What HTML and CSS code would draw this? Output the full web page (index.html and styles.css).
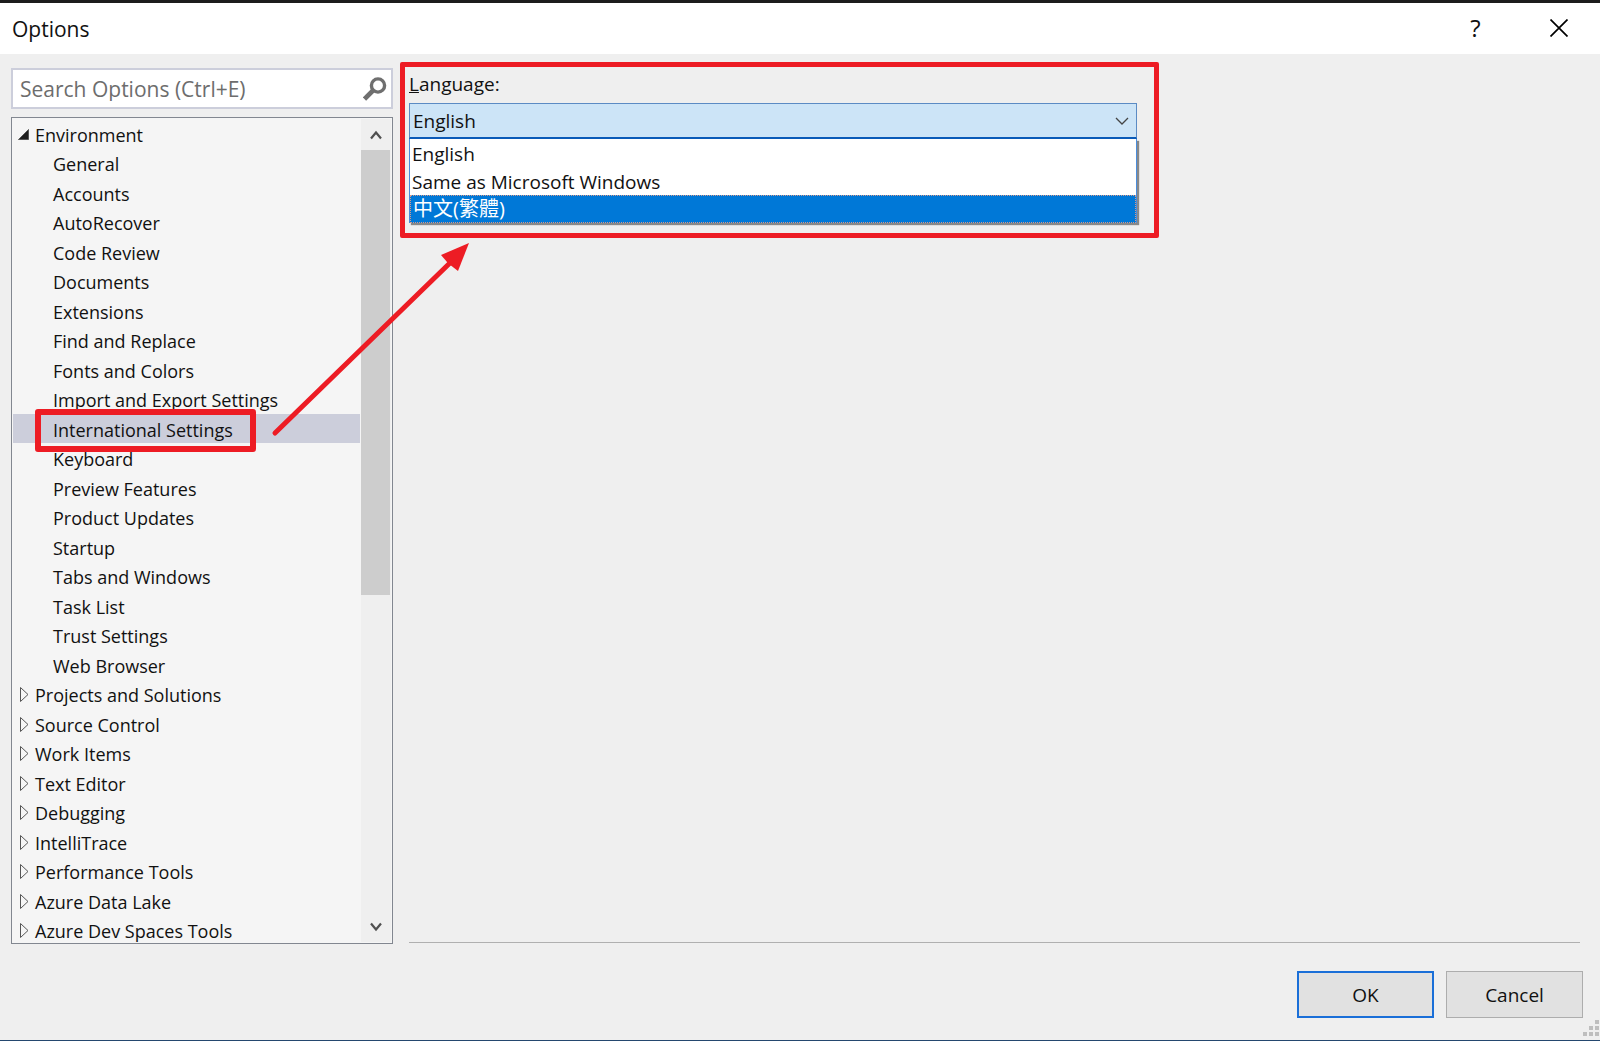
FILE: index.html
```html
<!DOCTYPE html>
<html lang="en">
<head>
<meta charset="utf-8">
<title>Options</title>
<link rel="stylesheet" href="styles.css">
</head>
<body>
<div class="dialog">
  <header class="titlebar">
    <h1 class="title">Options</h1>
    <button class="title-button" type="button" aria-label="Help"><span class="help-mark">?</span></button>
    <button class="title-button" type="button" aria-label="Close">
      <svg width="18" height="18" viewBox="0 0 18 18"><path d="M0.5 0.5L17.5 17.5M17.5 0.5L0.5 17.5" stroke="#000" stroke-width="1.7" fill="none"/></svg>
    </button>
  </header>

  <div class="content">
    <nav class="sidebar">
      <div class="search">
        <input class="search-input" type="text" placeholder="Search Options (Ctrl+E)" aria-label="Search Options">
        <svg class="search-icon" width="24" height="24" viewBox="0 0 24 24"><circle cx="15" cy="8.5" r="6.6" fill="none" stroke="#6f6f6f" stroke-width="3.4"/><path d="M10.500 13L1.500 22" stroke="#6f6f6f" stroke-width="4.6"/></svg>
      </div>
      <div class="tree">
        <ul class="tree-list" role="tree">
          <li class="root" role="treeitem" aria-expanded="true"><svg class="arrow" width="12" height="16" viewBox="0 0 12 16"><path d="M10.500 2.500V12.500H0.500Z" fill="#1e1e1e"/></svg>Environment</li>
          <li class="leaf" role="treeitem">General</li>
          <li class="leaf" role="treeitem">Accounts</li>
          <li class="leaf" role="treeitem">AutoRecover</li>
          <li class="leaf" role="treeitem">Code Review</li>
          <li class="leaf" role="treeitem">Documents</li>
          <li class="leaf" role="treeitem">Extensions</li>
          <li class="leaf" role="treeitem">Find and Replace</li>
          <li class="leaf" role="treeitem">Fonts and Colors</li>
          <li class="leaf" role="treeitem">Import and Export Settings</li>
          <li class="leaf selected" role="treeitem" aria-selected="true">International Settings</li>
          <li class="leaf" role="treeitem">Keyboard</li>
          <li class="leaf" role="treeitem">Preview Features</li>
          <li class="leaf" role="treeitem">Product Updates</li>
          <li class="leaf" role="treeitem">Startup</li>
          <li class="leaf" role="treeitem">Tabs and Windows</li>
          <li class="leaf" role="treeitem">Task List</li>
          <li class="leaf" role="treeitem">Trust Settings</li>
          <li class="leaf" role="treeitem">Web Browser</li>
          <li class="root" role="treeitem" aria-expanded="false"><svg class="arrow" width="12" height="16" viewBox="0 0 12 16"><path d="M2.5 0.5V14.5L10 7.5Z"/></svg>Projects and Solutions</li>
          <li class="root" role="treeitem" aria-expanded="false"><svg class="arrow" width="12" height="16" viewBox="0 0 12 16"><path d="M2.5 0.5V14.5L10 7.5Z"/></svg>Source Control</li>
          <li class="root" role="treeitem" aria-expanded="false"><svg class="arrow" width="12" height="16" viewBox="0 0 12 16"><path d="M2.5 0.5V14.5L10 7.5Z"/></svg>Work Items</li>
          <li class="root" role="treeitem" aria-expanded="false"><svg class="arrow" width="12" height="16" viewBox="0 0 12 16"><path d="M2.5 0.5V14.5L10 7.5Z"/></svg>Text Editor</li>
          <li class="root" role="treeitem" aria-expanded="false"><svg class="arrow" width="12" height="16" viewBox="0 0 12 16"><path d="M2.5 0.5V14.5L10 7.5Z"/></svg>Debugging</li>
          <li class="root" role="treeitem" aria-expanded="false"><svg class="arrow" width="12" height="16" viewBox="0 0 12 16"><path d="M2.5 0.5V14.5L10 7.5Z"/></svg>IntelliTrace</li>
          <li class="root" role="treeitem" aria-expanded="false"><svg class="arrow" width="12" height="16" viewBox="0 0 12 16"><path d="M2.5 0.5V14.5L10 7.5Z"/></svg>Performance Tools</li>
          <li class="root" role="treeitem" aria-expanded="false"><svg class="arrow" width="12" height="16" viewBox="0 0 12 16"><path d="M2.5 0.5V14.5L10 7.5Z"/></svg>Azure Data Lake</li>
          <li class="root" role="treeitem" aria-expanded="false"><svg class="arrow" width="12" height="16" viewBox="0 0 12 16"><path d="M2.5 0.5V14.5L10 7.5Z"/></svg>Azure Dev Spaces Tools</li>
        </ul>
        <div class="scrollbar">
          <button class="scroll-button" type="button" aria-label="Scroll up"><svg width="12" height="10" viewBox="0 0 12 10"><path d="M1 8.5L6 2.5L11 8.5" fill="none" stroke="#505050" stroke-width="2.2"/></svg></button>
          <div class="scroll-track"><div class="scroll-thumb"></div></div>
          <button class="scroll-button" type="button" aria-label="Scroll down"><svg width="12" height="10" viewBox="0 0 12 10"><path d="M1 1.5L6 7.5L11 1.5" fill="none" stroke="#505050" stroke-width="2.2"/></svg></button>
        </div>
      </div>
    </nav>

    <main class="page">
      <section class="language">
        <label class="language-label" for="language"><u>L</u>anguage:</label>
        <div class="combo">
          <select class="combo-select" id="language"><option>English</option><option>Same as Microsoft Windows</option><option>中文(繁體)</option></select>
          <svg class="combo-chevron" width="14" height="8" viewBox="0 0 14 8"><path d="M1 1L7 7L13 1" fill="none" stroke="#444" stroke-width="1.3"/></svg>
        </div>
        <ul class="dropdown" role="listbox" aria-label="Language">
          <li class="option" role="option">English</li>
          <li class="option" role="option">Same as Microsoft Windows</li>
          <li class="option active" role="option" aria-selected="true">中文(繁體)</li>
        </ul>
      </section>
      <hr class="divider">
    </main>

    <svg class="pointer" width="202" height="198" viewBox="0 0 202 198"><path d="M4 193L182 20" stroke="#ed1c24" stroke-width="5" stroke-linecap="round"/><path d="M198 3L170 15L176 22L178 24L187 31Z" fill="#ed1c24"/></svg>
  </div>

  <footer class="actions">
    <button class="button primary" type="button">OK</button>
    <button class="button" type="button">Cancel</button>
    <svg class="grip" width="16" height="16" viewBox="0 0 16 16" fill="#bebebe"><path d="M12 0h4v4h-4zM6 6h4v4h-4zM12 6h4v4h-4zM0 12h4v4h-4zM6 12h4v4h-4zM12 12h4v4h-4z"/></svg>
  </footer>
</div>
</body>
</html>
```
FILE: styles.css
```css
*,
*::after {
  box-sizing: border-box;
}

body {
  margin: 0;
  background: #efefef;
  color: #111;
  font: 19px/24px "Open Sans", "Noto Sans", "Noto Sans CJK TC", sans-serif;
}

button,
input,
select {
  font: inherit;
  color: inherit;
  margin: 0;
  border-radius: 0;
}

ul {
  list-style: none;
  margin: 0;
  padding: 0;
}

.dialog {
  display: flex;
  flex-direction: column;
  height: 100vh;
  border-top: 3px solid #1c1c1c;
  border-bottom: 1px solid #24486f;
}

.titlebar {
  display: flex;
  align-items: center;
  height: 51px;
  padding-left: 12px;
  background: #fff;
}

.title {
  flex: 1;
  margin: 0;
  font-size: 21px;
  font-weight: 400;
}

.title-button {
  display: flex;
  align-items: center;
  justify-content: center;
  width: 83px;
  height: 51px;
  padding: 0 0 2px;
  border: 0;
  background: none;
}

.help-mark {
  font-size: 24px;
}

.content {
  position: relative;
  display: flex;
  flex: 1;
  gap: 7px;
  min-height: 0;
  padding: 8px 20px 0 11px;
}

.sidebar {
  display: flex;
  flex-direction: column;
  flex: none;
  gap: 8px;
  width: 382px;
  padding-top: 6px;
}

.search {
  display: flex;
  align-items: center;
  height: 41px;
  padding-right: 4px;
  border: 2px solid #cccedb;
  background: #fff;
}

.search-input {
  flex: 1;
  min-width: 0;
  padding: 1px 0 0 7px;
  border: 0;
  outline: 0;
  background: none;
  font-size: 21px;
}

.search-input::placeholder {
  color: #6d6d6d;
  opacity: 1;
}

.tree {
  display: flex;
  flex: 1;
  gap: 1px;
  min-height: 0;
  padding: 1px;
  border: 1px solid #828790;
  background: #f5f5f5;
  overflow: hidden;
  font-size: 18px;
}

.tree-list {
  flex: 1;
}

.tree-list li {
  display: flex;
  align-items: center;
  height: 29px;
  padding-top: 2px;
  white-space: nowrap;
}

.tree-list li:nth-child(even) {
  height: 30px;
}

.root {
  gap: 5px;
  padding-left: 5px;
}

.arrow {
  fill: none;
  stroke: #555;
}

.leaf {
  padding-left: 40px;
}

.selected {
  position: relative;
  background: #cccedb;
}

.selected::after {
  content: "";
  position: absolute;
  top: -5px;
  left: 22px;
  width: 221px;
  height: 43px;
  border: 6px solid #ed1c24;
  border-radius: 3px;
}

.scrollbar {
  display: flex;
  flex-direction: column;
  width: 30px;
  background: #efefef;
}

.scroll-button {
  display: flex;
  align-items: center;
  justify-content: center;
  height: 31px;
  padding: 0;
  border: 0;
  background: none;
}

.scroll-track {
  flex: 1;
}

.scroll-thumb {
  width: 29px;
  height: 58.5%;
  background: #cdcdcd;
}

.page {
  display: flex;
  flex: 1;
  flex-direction: column;
  justify-content: space-between;
}

.language {
  display: flex;
  flex-direction: column;
  width: 100%;
  max-width: 759px;
  padding: 9px 17px 10px 4px;
  border: 5px solid #ed1c24;
  border-radius: 2px;
}

.language-label {
  align-self: flex-start;
  height: 27px;
  line-height: 16px;
}

.combo {
  display: flex;
  align-items: center;
  position: relative;
}

.combo-select {
  width: 100%;
  height: 36px;
  padding: 1px 3px 0;
  appearance: none;
  border: 1px solid #5b8bc4;
  border-bottom: 2px solid #0a5ab8;
  outline: 0;
  background: #cce4f7;
}

.combo-chevron {
  position: absolute;
  right: 8px;
  pointer-events: none;
}

.dropdown {
  border: 1px solid #4a8ddc;
  border-top: 0;
  border-bottom: 0;
  background: #fff;
  box-shadow: 2px 2px 1px #888;
}

.option {
  height: 28px;
  padding-left: 2px;
  line-height: 31px;
}

.active {
  border: 1px dotted #d79a8a;
  background: #0078d7;
  color: #fff;
  font-size: 20px;
  line-height: 26px;
}

.divider {
  width: calc(100% - 9px);
  margin: 0 0 1px 9px;
  border: 0;
  border-top: 1px solid #b0b0b0;
}

.pointer {
  position: absolute;
  top: 186px;
  left: 271px;
  fill: none;
  pointer-events: none;
}

.actions {
  position: relative;
  display: flex;
  justify-content: flex-end;
  gap: 12px;
  padding: 27px 17px 22px;
}

.button {
  width: 137px;
  height: 47px;
  padding: 0;
  border: 1px solid #adadad;
  background: #e1e1e1;
}

.primary {
  border: 2px solid #1a6fd8;
}

.grip {
  position: absolute;
  right: 1px;
  bottom: 4px;
}
```
